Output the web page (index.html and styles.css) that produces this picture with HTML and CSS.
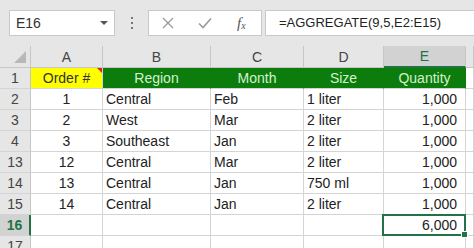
FILE: index.html
```html
<!DOCTYPE html>
<html lang="en">
<head>
  <meta charset="UTF-8" />
  <title>AGGREGATE</title>
  <link rel="stylesheet" href="styles.css">
</head>
<body>
  <div class="toolbar">
    <div class="name-box">
      <span>E16</span>
      <span class="caret"></span>
    </div>
    <div class="grip"><i></i><i></i><i></i></div>
    <div class="fx-box">
      <svg class="ico" width="14" height="14" viewBox="0 0 14 14"><path d="M2 2 L12 12 M12 2 L2 12" stroke="#9a9a9a" stroke-width="1.3" fill="none"/></svg>
      <svg class="ico" width="16" height="14" viewBox="0 0 16 14"><path d="M2 7.5 L6 11.5 L14 2.5" stroke="#9a9a9a" stroke-width="1.6" fill="none"/></svg>
      <span class="fx">f<sub>x</sub></span>
    </div>
    <div class="formula">=AGGREGATE(9,5,E2:E15)</div>
  </div>

  <div class="sheet">
    <div class="hd corner"><span class="tri"></span></div>
    <div class="hd">A</div>
    <div class="hd">B</div>
    <div class="hd">C</div>
    <div class="hd">D</div>
    <div class="hd sel">E</div>
    <div class="hd"></div>

    <div class="rh">1</div>
    <div class="c mid yellow note">Order #</div>
    <div class="c mid green">Region</div>
    <div class="c mid green">Month</div>
    <div class="c mid green">Size</div>
    <div class="c mid green">Quantity</div>
    <div class="c"></div>

    <div class="rh">2</div>
    <div class="c mid">1</div><div class="c">Central</div><div class="c">Feb</div><div class="c">1 liter</div><div class="c num">1,000</div><div class="c"></div>

    <div class="rh">3</div>
    <div class="c mid">2</div><div class="c">West</div><div class="c">Mar</div><div class="c">2 liter</div><div class="c num">1,000</div><div class="c"></div>

    <div class="rh">4</div>
    <div class="c mid">3</div><div class="c">Southeast</div><div class="c">Jan</div><div class="c">2 liter</div><div class="c num">1,000</div><div class="c"></div>

    <div class="rh">13</div>
    <div class="c mid">12</div><div class="c">Central</div><div class="c">Mar</div><div class="c">2 liter</div><div class="c num">1,000</div><div class="c"></div>

    <div class="rh">14</div>
    <div class="c mid">13</div><div class="c">Central</div><div class="c">Jan</div><div class="c">750 ml</div><div class="c num">1,000</div><div class="c"></div>

    <div class="rh">15</div>
    <div class="c mid">14</div><div class="c">Central</div><div class="c">Jan</div><div class="c">2 liter</div><div class="c num">1,000</div><div class="c"></div>

    <div class="rh sel">16</div>
    <div class="c"></div><div class="c"></div><div class="c"></div><div class="c"></div><div class="c num active">6,000<span class="handle"></span></div><div class="c"></div>

    <div class="rh">17</div>
    <div class="c"></div><div class="c"></div><div class="c"></div><div class="c"></div><div class="c"></div><div class="c"></div>
  </div>
</body>
</html>
```

FILE: styles.css
```css
html, body {
  margin: 0;
  padding: 0;
  height: 100%;
  overflow: hidden;
  background: #fff;
  font-family: 'Liberation Sans', Arial, sans-serif;
  color: #222;
}

/* formula bar */
.toolbar {
  height: 46px;
  background: #e6e6e6;
  display: flex;
  align-items: flex-start;
  padding-top: 10px;
  box-sizing: border-box;
}

.name-box {
  margin-left: 9px;
  width: 106px;
  height: 26px;
  background: #fff;
  border: 1px solid #c8c8c8;
  box-sizing: border-box;
  display: flex;
  align-items: center;
  justify-content: space-between;
  padding: 0 6px 0 6px;
  font-size: 14px;
  color: #333;
}

.caret {
  width: 0;
  height: 0;
  border-left: 4px solid transparent;
  border-right: 4px solid transparent;
  border-top: 4px solid #555;
}

.grip {
  width: 33px;
  height: 26px;
  display: flex;
  flex-direction: column;
  align-items: center;
  justify-content: center;
  gap: 3px;
}

.grip i {
  width: 2px;
  height: 2px;
  background: #777;
}

.fx-box {
  width: 114px;
  height: 26px;
  background: #fff;
  border: 1px solid #c8c8c8;
  box-sizing: border-box;
  display: flex;
  align-items: center;
  padding-left: 12px;
  gap: 22px;
}

.fx {
  font-family: 'Liberation Serif', serif;
  font-style: italic;
  font-size: 15px;
  color: #555;
  margin-left: 2px;
}

.fx sub {
  font-size: 10px;
  vertical-align: -1px;
}

.formula {
  flex: 1;
  margin-left: 3px;
  height: 26px;
  background: #fff;
  border: 1px solid #c8c8c8;
  border-right: none;
  box-sizing: border-box;
  padding-left: 13px;
  line-height: 24px;
  font-size: 13px;
  color: #222;
}

/* grid */
.sheet {
  display: grid;
  grid-template-columns: 31px 72px 108px 93px 80px 82px 1fr;
  grid-template-rows: 22px repeat(9, 21px);
  font-size: 14px;
}

.hd {
  background: #e6e6e6;
  border-right: 1px solid #c6c6c6;
  border-bottom: 1px solid #c6c6c6;
  box-sizing: border-box;
  color: #444;
  display: flex;
  align-items: center;
  justify-content: center;
}

.hd.sel {
  background: #d2d2d2;
  color: #217346;
  border-bottom: 2px solid #217346;
}

.corner {
  position: relative;
}

.tri {
  position: absolute;
  right: 4px;
  bottom: 4px;
  width: 0;
  height: 0;
  border-left: 12px solid transparent;
  border-bottom: 12px solid #b8b8b8;
}

.rh {
  background: #e6e6e6;
  border-right: 1px solid #c6c6c6;
  border-bottom: 1px solid #d4d4d4;
  box-sizing: border-box;
  color: #444;
  display: flex;
  align-items: center;
  justify-content: center;
}

.rh.sel {
  background: #d2d2d2;
  color: #217346;
  font-weight: bold;
  border-right: 2px solid #217346;
}

.c {
  border-right: 1px solid #d4d4d4;
  border-bottom: 1px solid #d4d4d4;
  box-sizing: border-box;
  padding: 0 3px;
  display: flex;
  align-items: center;
  white-space: nowrap;
  position: relative;
}

.mid {
  justify-content: center;
}

.num {
  justify-content: flex-end;
  padding-right: 8px;
}

.yellow {
  background: #ffff00;
  color: #333;
}

.green {
  background: #0c7d0c;
  color: #d6f0cf;
  border-right-color: #0c7d0c;
}

.note::after {
  content: '';
  position: absolute;
  top: 0;
  right: 0;
  border-left: 5px solid transparent;
  border-top: 5px solid #e02020;
}

.active::after {
  content: '';
  position: absolute;
  top: -1px;
  left: -2px;
  right: -1px;
  bottom: -1px;
  border: 2px solid #217346;
}

.handle {
  position: absolute;
  right: -3px;
  bottom: -3px;
  width: 5px;
  height: 5px;
  background: #217346;
  border: 1px solid #fff;
  z-index: 1;
}
```
